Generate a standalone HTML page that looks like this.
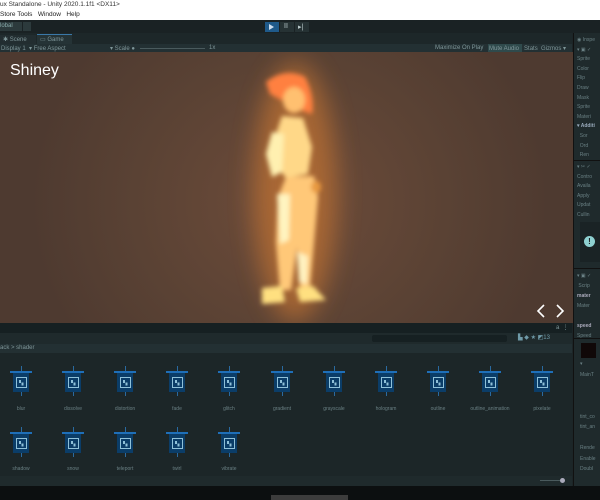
<!DOCTYPE html>
<html><head><style>
*{margin:0;padding:0;box-sizing:border-box}
body{width:600px;height:500px;overflow:hidden;background:#1c2527;font-family:"Liberation Sans",sans-serif;position:relative}
.a{position:absolute}
.t{font-size:6px;color:#7f9699;white-space:nowrap}
.ic{position:absolute;width:22px;height:31px}
.ic .bar{position:absolute;left:0;top:5px;width:22px;height:2px;background:#1f6fb8}
.ic .st{position:absolute;left:10.5px;width:1px;background:#2a6aa0}
.ic .bx{position:absolute;left:3px;top:7px;width:16px;height:19px;background:#0b3d68}
.ic .in{position:absolute;left:2.5px;top:4px;width:11px;height:11px;border:1.5px solid #8fc1d9}
.ic .in i{position:absolute;left:2px;top:2px;width:2.5px;height:2.5px;background:#8fc1d9;box-shadow:2.5px 2.5px 0 #8fc1d9}
.lb{position:absolute;font-size:5px;color:#6a8084;transform:translateX(-50%);white-space:nowrap}
.ins{position:absolute;left:577px;font-size:5px;color:#6a8084;white-space:nowrap}
</style></head><body>
<div class="a" style="left:0;top:0;width:600px;height:20px;background:#fff"></div>
<div class="a" style="left:0;top:1px;font-size:6.5px;color:#333">ux Standalone - Unity 2020.1.1f1 &lt;DX11&gt;</div>
<div class="a" style="left:0;top:11px;font-size:6.5px;color:#222">Store Tools&nbsp;&nbsp;&nbsp;Window&nbsp;&nbsp;&nbsp;Help</div>
<div class="a" style="left:0;top:20px;width:600px;height:13px;background:#1a2224"></div>
<div class="a" style="left:0;top:22px;width:22px;height:9px;background:#2c3a3c"></div>
<div class="a t" style="left:0;top:23px;color:#8aa">lobal</div>
<div class="a" style="left:23px;top:22px;width:8px;height:9px;background:#2c3a3c"></div>
<div class="a" style="left:265px;top:22px;width:14px;height:10px;background:#1f5a8a"></div>
<div class="a" style="left:269px;top:24px;width:0;height:0;border-left:5px solid #cde;border-top:3px solid transparent;border-bottom:3px solid transparent"></div>
<div class="a" style="left:280px;top:22px;width:14px;height:10px;background:#263234"></div>
<div class="a t" style="left:284px;top:23px;color:#bcc;font-size:7px">II</div>
<div class="a" style="left:295px;top:22px;width:14px;height:10px;background:#263234"></div>
<div class="a t" style="left:298px;top:23px;color:#bcc;font-size:7px">▸|</div>
<div class="a" style="left:0;top:33px;width:572px;height:11px;background:#1d2729"></div>
<div class="a" style="left:0;top:35px;width:36px;height:9px;background:#222d30"></div>
<div class="a t" style="left:3px;top:36px">✱ Scene</div>
<div class="a" style="left:37px;top:34px;width:35px;height:10px;background:#253336;border-top:1px solid #3a78a8"></div>
<div class="a t" style="left:40px;top:36px">▭ Game</div>
<div class="a" style="left:0;top:44px;width:572px;height:8px;background:#233033"></div>
<div class="a t" style="left:1px;top:45px">Display 1 &nbsp;▾ Free Aspect</div>
<div class="a t" style="left:110px;top:45px">▾ Scale ●</div>
<div class="a" style="left:140px;top:48px;width:65px;height:1px;background:#4a5a5d"></div>
<div class="a t" style="left:209px;top:45px">1x</div>
<div class="a t" style="left:435px;top:45px">Maximize On Play</div>
<div class="a" style="left:488px;top:44px;width:34px;height:8px;background:#2f4a4c"></div>
<div class="a t" style="left:489px;top:45px">Mute Audio &nbsp; Stats &nbsp;Gizmos ▾</div>
<div class="a" style="left:0;top:52px;width:573px;height:271px;background:radial-gradient(ellipse 260px 240px at 290px 150px,#6e4c3a,#5a4234 60%,#4e3a30)"></div>
<svg class="a" style="left:0;top:52px" width="573" height="271">
<defs><filter id="b" x="-50%" y="-50%" width="200%" height="200%"><feGaussianBlur stdDeviation="12"/></filter><filter id="s" x="-20%" y="-20%" width="140%" height="140%"><feGaussianBlur stdDeviation="2.5"/></filter></defs>
<ellipse cx="295" cy="140" rx="42" ry="130" fill="#d27a30" opacity=".6" filter="url(#b)"/>
<g filter="url(#s)">
<path d="M266 30 Q285 15 305 25 Q315 45 312 62 L300 58 Q285 50 270 42Z" fill="#ff8040"/>
<ellipse cx="294" cy="48" rx="11" ry="13" fill="#ffc070"/>
<path d="M282 64 L303 66 L312 95 L308 122 L286 126 L275 112 L276 82Z" fill="#ffd888"/>
<path d="M272 80 L284 82 L282 120 L272 125 L266 102Z" fill="#fff0b0"/>
<path d="M286 125 L314 124 L318 145 L314 190 L310 235 L300 238 L297 195 L291 238 L280 238 L276 190 L278 145Z" fill="#ffc878"/>
<path d="M277 142 L290 142 L289 188 L280 192 Z" fill="#fff4c0"/>
<path d="M297 200 L308 204 L307 232 L299 230Z" fill="#fff2c0"/>
<path d="M262 236 L282 234 L285 250 L262 252Z" fill="#ffe080"/>
<path d="M296 236 L313 234 L326 248 L300 250Z" fill="#ffe080"/>
<ellipse cx="316" cy="135" rx="5" ry="6" fill="#e89a40"/>
</g>
</svg>
<div class="a" style="left:10px;top:62px;font-size:16px;color:#fff">Shiney</div>
<svg class="a" style="left:535px;top:303px" width="35" height="16"><path d="M9 2 L3 8 L9 14 M22 2 L28 8 L22 14" stroke="#fff" stroke-width="1.6" fill="none"/></svg>
<div class="a" style="left:0;top:323px;width:572px;height:10px;background:#162022"></div>
<div class="a t" style="left:556px;top:324px">a &nbsp;⋮</div>
<div class="a" style="left:0;top:333px;width:572px;height:11px;background:#1f2a2c"></div>
<div class="a" style="left:372px;top:335px;width:135px;height:7px;background:#162022;border-radius:2px"></div>
<div class="a t" style="left:518px;top:334px;color:#6f9aa8">▙ ◆ ★ ◩13</div>
<div class="a" style="left:0;top:344px;width:572px;height:9px;background:#233033"></div>
<div class="a t" style="left:0;top:345px">ack &gt; shader</div>
<div class="a" style="left:0;top:353px;width:572px;height:123px;background:#1c2628"></div>

<div class="ic" style="left:10px;top:366px"><div class="st" style="top:0;height:26px"></div><div class="bar"></div><div class="bx"><div class="in"><i></i></div></div><div class="st" style="top:26px;height:4px"></div></div>
<div class="ic" style="left:62px;top:366px"><div class="st" style="top:0;height:26px"></div><div class="bar"></div><div class="bx"><div class="in"><i></i></div></div><div class="st" style="top:26px;height:4px"></div></div>
<div class="ic" style="left:114px;top:366px"><div class="st" style="top:0;height:26px"></div><div class="bar"></div><div class="bx"><div class="in"><i></i></div></div><div class="st" style="top:26px;height:4px"></div></div>
<div class="ic" style="left:166px;top:366px"><div class="st" style="top:0;height:26px"></div><div class="bar"></div><div class="bx"><div class="in"><i></i></div></div><div class="st" style="top:26px;height:4px"></div></div>
<div class="ic" style="left:218px;top:366px"><div class="st" style="top:0;height:26px"></div><div class="bar"></div><div class="bx"><div class="in"><i></i></div></div><div class="st" style="top:26px;height:4px"></div></div>
<div class="ic" style="left:271px;top:366px"><div class="st" style="top:0;height:26px"></div><div class="bar"></div><div class="bx"><div class="in"><i></i></div></div><div class="st" style="top:26px;height:4px"></div></div>
<div class="ic" style="left:323px;top:366px"><div class="st" style="top:0;height:26px"></div><div class="bar"></div><div class="bx"><div class="in"><i></i></div></div><div class="st" style="top:26px;height:4px"></div></div>
<div class="ic" style="left:375px;top:366px"><div class="st" style="top:0;height:26px"></div><div class="bar"></div><div class="bx"><div class="in"><i></i></div></div><div class="st" style="top:26px;height:4px"></div></div>
<div class="ic" style="left:427px;top:366px"><div class="st" style="top:0;height:26px"></div><div class="bar"></div><div class="bx"><div class="in"><i></i></div></div><div class="st" style="top:26px;height:4px"></div></div>
<div class="ic" style="left:479px;top:366px"><div class="st" style="top:0;height:26px"></div><div class="bar"></div><div class="bx"><div class="in"><i></i></div></div><div class="st" style="top:26px;height:4px"></div></div>
<div class="ic" style="left:531px;top:366px"><div class="st" style="top:0;height:26px"></div><div class="bar"></div><div class="bx"><div class="in"><i></i></div></div><div class="st" style="top:26px;height:4px"></div></div>
<div class="lb" style="left:21px;top:406px">blur</div>
<div class="lb" style="left:73px;top:406px">dissolve</div>
<div class="lb" style="left:125px;top:406px">distortion</div>
<div class="lb" style="left:177px;top:406px">fade</div>
<div class="lb" style="left:229px;top:406px">glitch</div>
<div class="lb" style="left:282px;top:406px">gradient</div>
<div class="lb" style="left:334px;top:406px">grayscale</div>
<div class="lb" style="left:386px;top:406px">hologram</div>
<div class="lb" style="left:438px;top:406px">outline</div>
<div class="lb" style="left:490px;top:406px">outline_animation</div>
<div class="lb" style="left:542px;top:406px">pixelate</div>

<div class="ic" style="left:10px;top:427px"><div class="st" style="top:0;height:26px"></div><div class="bar"></div><div class="bx"><div class="in"><i></i></div></div><div class="st" style="top:26px;height:4px"></div></div>
<div class="ic" style="left:62px;top:427px"><div class="st" style="top:0;height:26px"></div><div class="bar"></div><div class="bx"><div class="in"><i></i></div></div><div class="st" style="top:26px;height:4px"></div></div>
<div class="ic" style="left:114px;top:427px"><div class="st" style="top:0;height:26px"></div><div class="bar"></div><div class="bx"><div class="in"><i></i></div></div><div class="st" style="top:26px;height:4px"></div></div>
<div class="ic" style="left:166px;top:427px"><div class="st" style="top:0;height:26px"></div><div class="bar"></div><div class="bx"><div class="in"><i></i></div></div><div class="st" style="top:26px;height:4px"></div></div>
<div class="ic" style="left:218px;top:427px"><div class="st" style="top:0;height:26px"></div><div class="bar"></div><div class="bx"><div class="in"><i></i></div></div><div class="st" style="top:26px;height:4px"></div></div>
<div class="lb" style="left:21px;top:466px">shadow</div>
<div class="lb" style="left:73px;top:466px">snow</div>
<div class="lb" style="left:125px;top:466px">teleport</div>
<div class="lb" style="left:177px;top:466px">twirl</div>
<div class="lb" style="left:229px;top:466px">vibrate</div>

<div class="a" style="left:0;top:476px;width:572px;height:10px;background:#1f2a2c"></div>
<div class="a" style="left:540px;top:480px;width:20px;height:1px;background:#4a5a5d"></div>
<div class="a" style="left:560px;top:478px;width:5px;height:5px;border-radius:50%;background:#aab"></div>
<div class="a" style="left:0;top:486px;width:600px;height:14px;background:#0c0f10"></div>
<div class="a" style="left:271px;top:495px;width:77px;height:5px;background:#3c3c3c"></div>

<div class="a" style="left:573px;top:33px;width:27px;height:453px;background:#1f2a2c;border-left:1px solid #111"></div>
<div class="ins" style="top:36px;line-height:9.6px">◉ Inspe<br>▾ ▣ ✓<br>Sprite<br>Color<br>Flip<br>Draw<br>Mask<br>Sprite<br>Materi<br><b style="color:#9ab">▾ Additi</b><br>&nbsp;&nbsp;Sor<br>&nbsp;&nbsp;Ord<br>&nbsp;&nbsp;Ren</div>
<div class="a" style="left:573px;top:160px;width:27px;height:1px;background:#111"></div>
<div class="ins" style="top:163px;line-height:9.6px">▾ ✂ ✓<br>Contro<br>Availa<br>Apply<br>Updat<br>Cullin</div>
<div class="a" style="left:580px;top:222px;width:20px;height:40px;background:#1a2325"></div>
<div class="a" style="left:584px;top:236px;width:11px;height:11px;border-radius:50%;background:#8ed0d0;color:#1a2325;font-size:8px;font-weight:bold;text-align:center;line-height:11px">!</div>
<div class="a" style="left:573px;top:268px;width:27px;height:1px;background:#111"></div>
<div class="ins" style="top:271px;line-height:10px">▾ ▣ ✓<br>&nbsp;Scrip<br><b style="color:#aab">mater</b><br>Mater<br><br><b style="color:#aab">speed</b><br>Speed</div>
<div class="a" style="left:573px;top:338px;width:27px;height:1px;background:#111"></div>
<div class="a" style="left:581px;top:343px;width:15px;height:15px;background:#100808"></div>
<div class="ins" style="left:580px;top:359px;line-height:10.5px">▾<br>MainT<br><br><br><br>tint_co<br>tint_an<br><br>Rende<br>Enable<br>Doubl</div>
</body>
</html>
